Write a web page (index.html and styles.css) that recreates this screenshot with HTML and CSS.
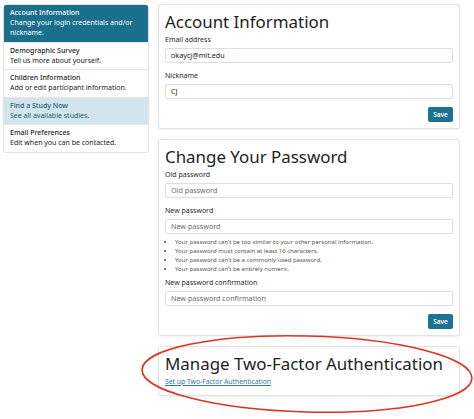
FILE: index.html
```html
<!DOCTYPE html>
<html>
<head>
<meta charset="utf-8">
<link rel="stylesheet" href="styles.css">
</head>
<body>
<div class="page">
  <nav class="side">
    <a class="item active"><span class="t">Account Information</span><span class="d">Change your login credentials and/or nickname.</span></a>
    <a class="item"><span class="t">Demographic Survey</span><span class="d">Tell us more about yourself.</span></a>
    <a class="item"><span class="t">Children Information</span><span class="d">Add or edit participant information.</span></a>
    <a class="item hl"><span class="t">Find a Study Now</span><span class="d">See all available studies.</span></a>
    <a class="item"><span class="t">Email Preferences</span><span class="d">Edit when you can be contacted.</span></a>
  </nav>
  <main class="main">
    <section class="card">
      <h1>Account Information</h1>
      <label>Email address</label>
      <div class="input">okaycj@mit.edu</div>
      <label>Nickname</label>
      <div class="input">CJ</div>
      <div class="actions"><button class="btn">Save</button></div>
    </section>
    <section class="card">
      <h1>Change Your Password</h1>
      <label>Old password</label>
      <div class="input ph">Old password</div>
      <label>New password</label>
      <div class="input ph">New password</div>
      <ul class="help">
        <li>Your password can’t be too similar to your other personal information.</li>
        <li>Your password must contain at least 16 characters.</li>
        <li>Your password can’t be a commonly used password.</li>
        <li>Your password can’t be entirely numeric.</li>
      </ul>
      <label>New password confirmation</label>
      <div class="input ph">New password confirmation</div>
      <div class="actions"><button class="btn">Save</button></div>
    </section>
    <section class="card">
      <h1>Manage Two-Factor Authentication</h1>
      <a class="link">Set up Two-Factor Authentication</a>
    </section>
  </main>
</div>
<svg class="annot" width="474" height="419" viewBox="0 0 474 419">
  <ellipse cx="307" cy="374" rx="165" ry="38" transform="rotate(1.5 307 374)" fill="none" stroke="#dc3522" stroke-width="1.6"/>
</svg>
</body>
</html>
```

FILE: styles.css
```css
html, body { margin: 0; padding: 0; background: #fff; }
body {
  font-family: "Noto Sans", "Open Sans", sans-serif;
  color: #222;
  width: 474px;
  height: 419px;
  overflow: hidden;
  position: relative;
}
.page {
  display: flex;
  align-items: flex-start;
  gap: 9px;
  padding: 4px 0 0 3px;
}
.side {
  width: 146px;
  border: 1px solid #e2e2e2;
  border-radius: 3px;
  display: flex;
  flex-direction: column;
  box-sizing: border-box;
  overflow: hidden;
}
.item {
  display: flex;
  flex-direction: column;
  padding: 3px 6px 3.5px;
  font-size: 7px;
  line-height: 10px;
  color: #222;
  border-top: 1px solid #e6e6e6;
}
.item:first-child { border-top: none; }
.item .t { font-weight: 500; }
.item.active { background: #1a6f8c; color: #fff; }
.item.hl { background: #d3e5ec; color: #1c5d73; }
.main {
  width: 302px;
  display: flex;
  flex-direction: column;
  gap: 10px;
}
.card {
  border: 1px solid #e3e3e3;
  border-radius: 3px;
  box-shadow: 0 1px 2px rgba(0,0,0,0.06);
  padding: 3px 6px 6px;
  display: flex;
  flex-direction: column;
}
h1 {
  margin: 0;
  font-size: 16.9px;
  font-weight: 400;
  line-height: 27px;
  color: #1e1e1e;
}
label {
  font-size: 7px;
  line-height: 10px;
  color: #2a2a2a;
  margin-bottom: 3px;
}
.input {
  height: 15px;
  box-sizing: border-box;
  border: 1px solid #dedede;
  border-radius: 2px;
  font-size: 7.2px;
  line-height: 13px;
  padding: 0 5px;
  color: #222;
  margin-bottom: 8px;
}
.input.ph { color: #6c6c6c; }
.help {
  margin: -4px 0 4px;
  padding-left: 10px;
  font-size: 6px;
  line-height: 9px;
  color: #555;
}
.actions { display: flex; justify-content: flex-end; }
.btn {
  font-family: inherit;
  background: #1b7391;
  color: #fff;
  border: none;
  border-radius: 2px;
  height: 15px;
  width: 25px;
  padding: 0;
  font-size: 6.5px;
  font-weight: 600;
}
.link {
  font-size: 6.8px;
  line-height: 10px;
  color: #2b7aa0;
  text-decoration: underline;
  margin: 0 0 2px;
}
.annot { position: absolute; left: 0; top: 0; pointer-events: none; }
```
